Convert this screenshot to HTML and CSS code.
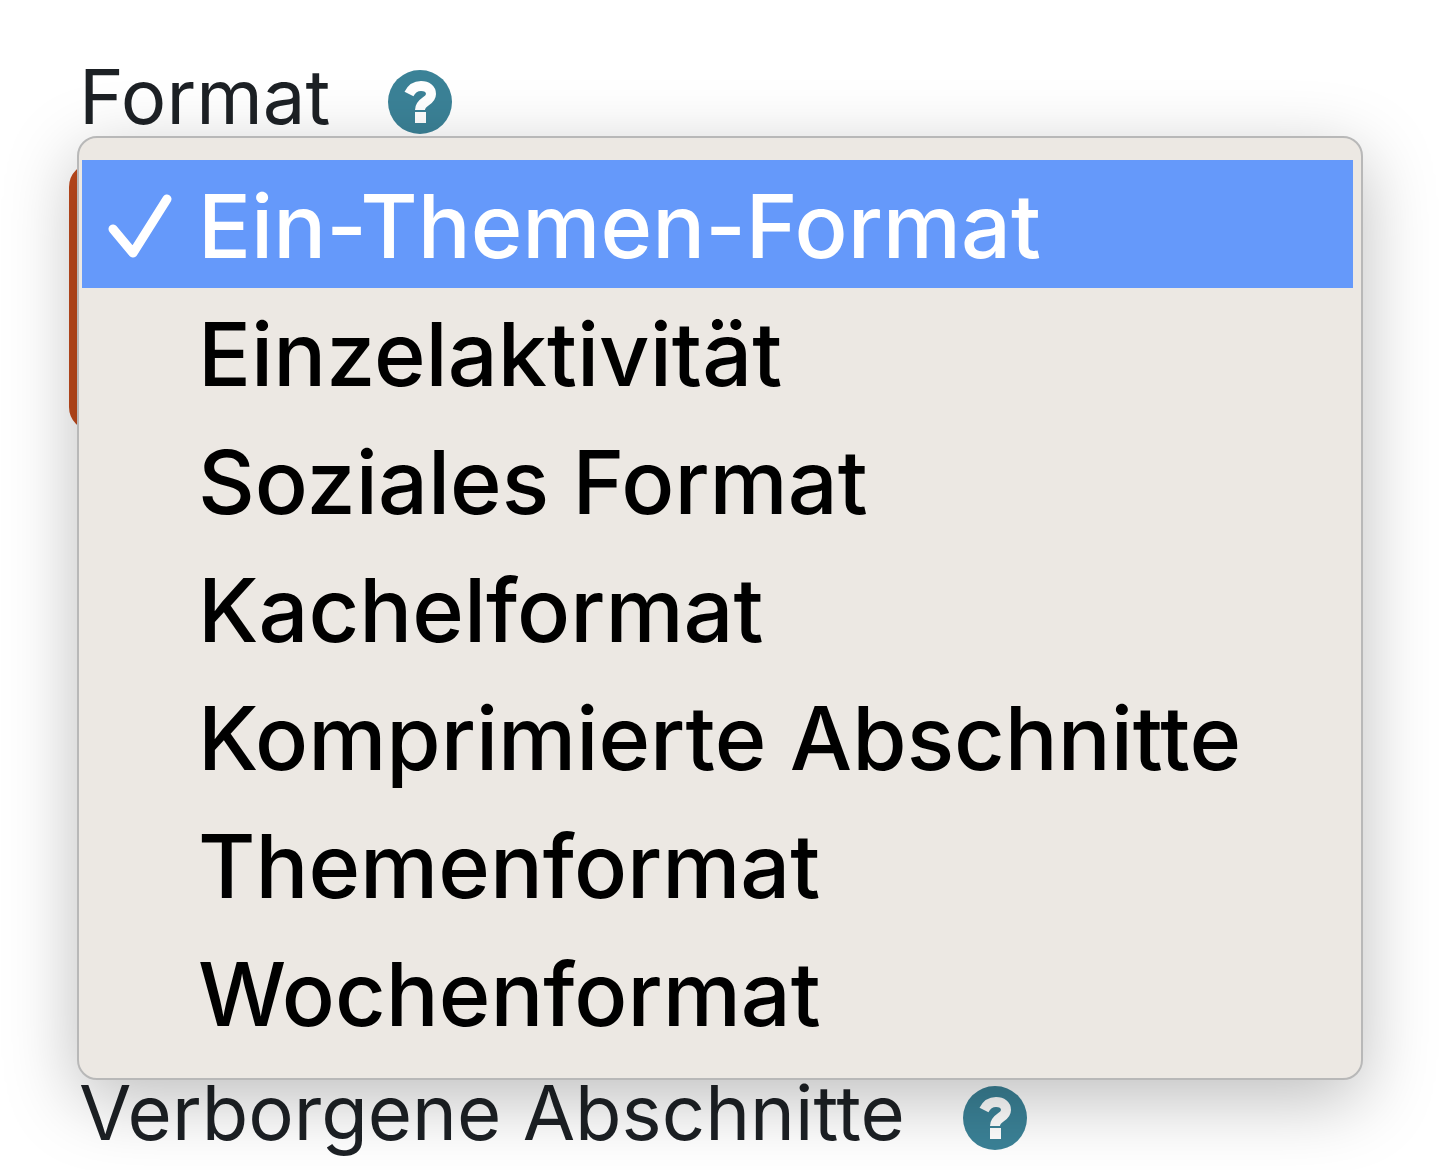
FILE: index.html
```html
<!DOCTYPE html>
<html lang="de">
    <head>
        <meta charset="utf-8">
        <title>Kursformat</title>
        <link rel="stylesheet" href="styles.css">
    </head>
    <body>
        <form class="settings">
            <div class="field">
                <div class="field-head">
                    <label for="format">Format</label>
                    <button type="button" class="help" aria-label="Hilfe zu Format">
                        <svg viewBox="0 0 64 64">
                            <circle cx="32" cy="32" r="32"/>
                            <path class="hook" d="M21 24C24 18 28 16 33 16C39 16 43 19 43 24C43 32 32 31 32 40"/>
                            <path class="dot" d="M27 42h11v11h-11z"/>
                        </svg>
                    </button>
                </div>
                <div class="control">
                    <select id="format" class="format">
                        <option>Ein-Themen-Format</option>
                        <option>Einzelaktivität</option>
                        <option>Soziales Format</option>
                        <option>Kachelformat</option>
                        <option>Komprimierte Abschnitte</option>
                        <option>Themenformat</option>
                        <option>Wochenformat</option>
                    </select>
                    <div class="menu" role="listbox" aria-label="Format">
                        <button type="button" class="item selected" role="option" aria-selected="true">
                            <svg class="check" viewBox="0 0 64 68"><path d="M5 37L25 61L59 7"/></svg>
                            Ein-Themen-Format
                        </button>
                        <button type="button" class="item" role="option">Einzelaktivität</button>
                        <button type="button" class="item" role="option">Soziales Format</button>
                        <button type="button" class="item" role="option">Kachelformat</button>
                        <button type="button" class="item" role="option">Komprimierte Abschnitte</button>
                        <button type="button" class="item" role="option">Themenformat</button>
                        <button type="button" class="item" role="option">Wochenformat</button>
                    </div>
                </div>
            </div>
            <div class="field">
                <div class="field-head">
                    <span>Verborgene Abschnitte</span>
                    <button type="button" class="help" aria-label="Hilfe zu Verborgene Abschnitte">
                        <svg viewBox="0 0 64 64">
                            <circle cx="32" cy="32" r="32"/>
                            <path class="hook" d="M21 24C24 18 28 16 33 16C39 16 43 19 43 24C43 32 32 31 32 40"/>
                            <path class="dot" d="M27 42h11v11h-11z"/>
                        </svg>
                    </button>
                </div>
            </div>
        </form>
    </body>
</html>
```

FILE: styles.css
```css
body {
    margin: 0;
    background-color: white;
    font-family: Inter, "Liberation Sans", sans-serif;
}
.settings {
    padding: 56px 77px 18px 69px;
}
.field-head {
    display: flex;
    align-items: center;
    gap: 58px;
    height: 80px;
    padding-left: 10px;
    color: #1d2125;
    font-size: 76px;
    line-height: 80px;
}
.help {
    width: 64px;
    height: 64px;
    margin-top: 12px;
    padding: 0;
    border: none;
    border-radius: 50%;
    background: none;
}
.help svg {
    display: block;
}
.help circle {
    fill: #3b8297;
}
.hook {
    fill: none;
    stroke: white;
    stroke-width: 10;
}
.dot {
    fill: white;
}
.control {
    box-sizing: border-box;
    position: relative;
    height: 936px;
    padding-top: 27px;
}
.format {
    box-sizing: border-box;
    width: 100%;
    height: 268px;
    border: 16px solid #c04a1c;
    border-radius: 24px;
    appearance: none;
    background-color: white;
    font-size: 76px;
}
/* open list, lies over the select and the labels */
.menu {
    box-sizing: border-box;
    position: absolute;
    top: 0;
    left: 8px;
    right: 0;
    padding: 22px 8px 22px 3px;
    border: 2px solid #b8b8b8;
    border-radius: 20px;
    background-color: #ece8e3;
    box-shadow: 0 20px 72px rgba(0, 0, 0, 0.26);
}
.item {
    display: flex;
    align-items: center;
    width: 100%;
    height: 128px;
    padding: 4px 0 0 116px;
    border: none;
    background: none;
    color: black;
    font-family: inherit;
    font-size: 88px;
    font-weight: 500;
    white-space: nowrap;
}
.item.selected {
    gap: 26px;
    padding-left: 26px;
    background-color: #6599fa;
    color: white;
}
.check {
    width: 64px;
    height: 68px;
}
.check path {
    fill: none;
    stroke: white;
    stroke-width: 9;
    stroke-linecap: round;
    stroke-linejoin: round;
}
```
